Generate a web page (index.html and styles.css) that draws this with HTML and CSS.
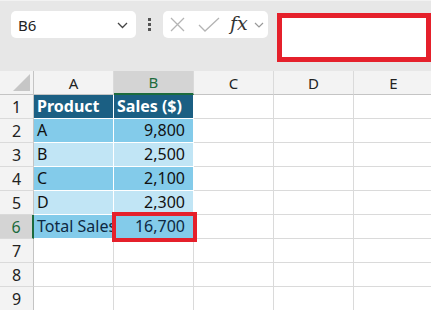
FILE: index.html
```html
<!doctype html>
<html lang="en">
<head>
  <meta charset="utf-8">
  <title>Sheet</title>
  <link rel="stylesheet" href="styles.css">
</head>
<body>
  <div class="toolbar">
    <div class="namebox">
      <span>B6</span>
      <svg class="chev" width="11" height="7" viewBox="0 0 11 7"><path d="M1 1l4.5 4.5L10 1" fill="none" stroke="#444" stroke-width="1.3"/></svg>
    </div>
    <div class="dots"><i></i><i></i><i></i></div>
    <div class="fxbox">
      <svg width="15" height="15" viewBox="0 0 15 15"><path d="M1 1l13 13M14 1L1 14" stroke="#b4b4b4" stroke-width="1.3" fill="none"/></svg>
      <svg width="22" height="15" viewBox="0 0 22 15"><path d="M1 8l6 6L21 1" stroke="#b4b4b4" stroke-width="1.3" fill="none"/></svg>
      <span class="fx">fx</span>
      <svg width="10" height="6" viewBox="0 0 10 6"><path d="M1 1l4 4l4-4" fill="none" stroke="#999" stroke-width="1.2"/></svg>
    </div>
    <div class="formula"></div>
  </div>

  <div class="sheet">
    <div class="hd corner"><i class="tri"></i></div>
    <div class="hd col">A</div>
    <div class="hd col sel">B</div>
    <div class="hd col">C</div>
    <div class="hd col">D</div>
    <div class="hd col">E</div>

    <div class="hd row">1</div>
    <div class="c t-head">Product</div>
    <div class="c t-head">Sales ($)</div>
    <div class="c"></div><div class="c"></div><div class="c"></div>

    <div class="hd row">2</div>
    <div class="c t-dark">A</div>
    <div class="c t-dark num">9,800</div>
    <div class="c"></div><div class="c"></div><div class="c"></div>

    <div class="hd row">3</div>
    <div class="c t-light">B</div>
    <div class="c t-light num">2,500</div>
    <div class="c"></div><div class="c"></div><div class="c"></div>

    <div class="hd row">4</div>
    <div class="c t-dark">C</div>
    <div class="c t-dark num">2,100</div>
    <div class="c"></div><div class="c"></div><div class="c"></div>

    <div class="hd row">5</div>
    <div class="c t-light">D</div>
    <div class="c t-light num">2,300</div>
    <div class="c"></div><div class="c"></div><div class="c"></div>

    <div class="hd row sel">6</div>
    <div class="c t-total">Total Sales</div>
    <div class="c t-total num active">16,700<span class="mark"></span></div>
    <div class="c"></div><div class="c"></div><div class="c"></div>

    <div class="hd row">7</div>
    <div class="c"></div><div class="c"></div><div class="c"></div><div class="c"></div><div class="c"></div>

    <div class="hd row">8</div>
    <div class="c"></div><div class="c"></div><div class="c"></div><div class="c"></div><div class="c"></div>

    <div class="hd row">9</div>
    <div class="c"></div><div class="c"></div><div class="c"></div><div class="c"></div><div class="c"></div>
  </div>
</body>
</html>
```

FILE: styles.css
```css
html, body { margin: 0; padding: 0; }
body { width: 431px; height: 310px; overflow: hidden; background: #fff; font-family: "Noto Sans", "Open Sans", sans-serif; }

/* toolbar */
.toolbar { display: flex; align-items: flex-start; height: 71px; box-sizing: border-box; padding: 10px 0 0 11px; background: #e7e7e7; border-top: 1px solid #f2f2f2; }
.namebox { display: flex; align-items: center; justify-content: space-between; width: 125px; height: 27px; box-sizing: border-box; padding: 0 8px 0 7px; background: #fff; border-radius: 5px; font-size: 15px; color: #222; }
.namebox .chev { margin-top: 1px; }
.dots { display: flex; flex-direction: column; gap: 2px; margin: 7px 12px 0 12px; }
.dots i { display: block; width: 3px; height: 3px; background: #555; }
.fxbox { display: flex; align-items: center; width: 105px; height: 27px; box-sizing: border-box; padding: 0 0 0 7px; background: #fff; border-radius: 5px; }
.fxbox svg:nth-child(2) { margin-left: 13px; }
.fx { margin-left: 10px; font-family: "DejaVu Serif", "Liberation Serif", serif; font-style: italic; font-size: 19px; color: #333; line-height: 1; margin-top: -2px; }
.fxbox svg:last-child { margin-left: 6px; }
.formula { width: 154px; height: 49px; box-sizing: border-box; margin: 2px 0 0 9px; background: #fff; border: 5px solid #e5202b; }

/* grid */
.sheet { display: grid; grid-template-columns: 34px repeat(5, 80px); grid-auto-rows: 24px; }
.sheet > div { box-sizing: border-box; border-right: 1px solid #dadada; border-bottom: 1px solid #dadada; white-space: nowrap; overflow: hidden; }
.hd { background: #f3f3f3; color: #222; display: flex; align-items: center; justify-content: center; }
.col { font-size: 15px; border-bottom-color: #c4c4c4 !important; }
.col.sel { background: #d4d4d4; color: #1c6b3d; border-bottom: 2px solid #1c6b3d !important; }
.row { font-size: 16px; border-right-color: #c4c4c4 !important; }
.row.sel { background: #d4d4d4; color: #1c6b3d; border-right: 2px solid #1c6b3d !important; }
.corner { position: relative; border-bottom-color: #c4c4c4 !important; border-right-color: #c4c4c4 !important; }
.tri { position: absolute; right: 3px; bottom: 3px; width: 0; height: 0; border-left: 17px solid transparent; border-bottom: 17px solid #c6c6c6; }

.c { font-size: 16px; line-height: 23px; padding: 0 3px; color: #111; }
.num { text-align: right; padding-right: 8px; }
.t-head { background: #1b5f83; color: #fff; font-weight: bold; border-color: #fff !important; }
.t-dark { background: #83cbea; border-color: #fff !important; }
.t-light { background: #c1e5f5; border-color: #fff !important; }
.t-total { background: #83cbea; color: #0e2841; border-color: #fff !important; }
.sheet > .active { position: relative; overflow: visible; }
.mark { position: absolute; left: -2px; top: -3px; width: 85px; height: 30px; box-sizing: border-box; border: 4px solid #e5202b; }
```
